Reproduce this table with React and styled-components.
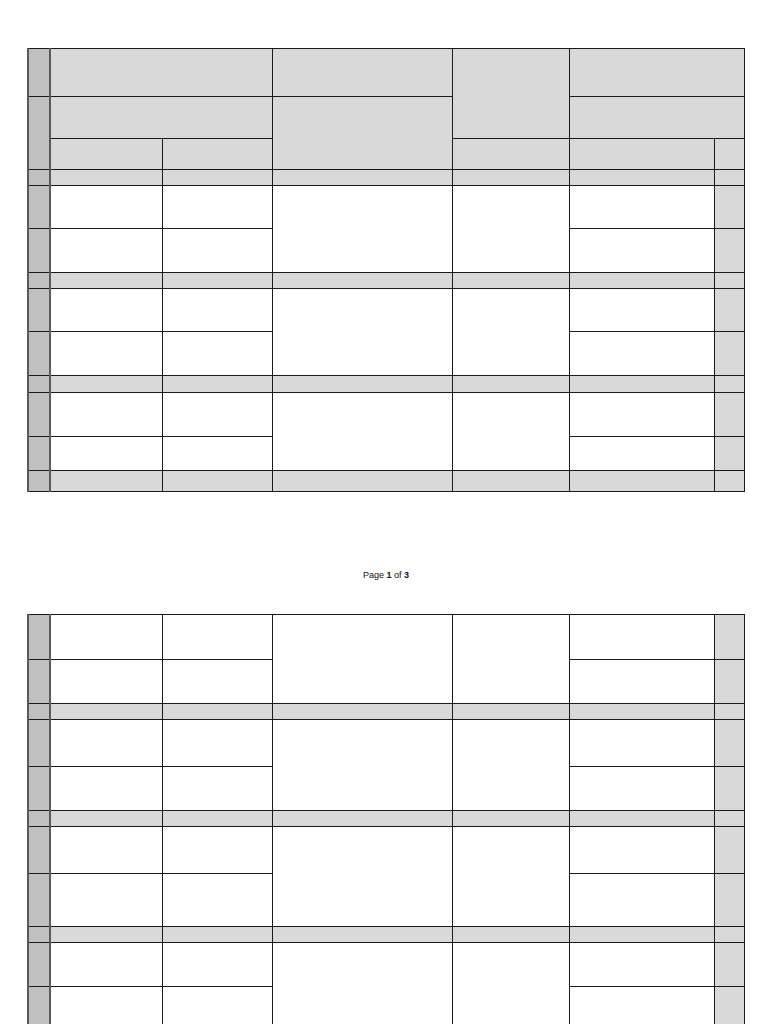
import React from "react";
import styled, { createGlobalStyle } from "styled-components";

const Global = createGlobalStyle`
  html, body { margin: 0; padding: 0; background: #fff; }
  body { font-family: "Liberation Sans", Arial, sans-serif; }
`;

const Page = styled.div`
  width: 768px;
  height: 1024px;
  overflow: hidden;
  padding-top: 48px;
  box-sizing: border-box;
`;

const Sheet = styled.table`
  margin-left: 27px;
  border-collapse: collapse;
  table-layout: fixed;
  width: 716px;
`;

const Row = styled.tr`
  height: ${(p) => p.$h}px;
`;

const Cell = styled.td`
  padding: 0;
  border: 1px solid #1a1a1a;
  background: ${(p) => (p.$gray ? "#d9d9d9" : "#ffffff")};
`;

const Strip = styled.td`
  padding: 0;
  border: 1px solid #1a1a1a;
  border-left: 2px solid #5a5a5a;
  border-right: 2px solid #5a5a5a;
  background: #c0c0c0;
`;

const Footer = styled.div`
  height: 122px;
  display: flex;
  align-items: flex-start;
  justify-content: center;
  padding-top: 78px;
  padding-left: 4px;
  box-sizing: border-box;
  font-size: 9px;
  line-height: 11px;
  color: #111;
  b { font-weight: 700; }
`;

const widths = [22, 112, 110, 180, 117, 145, 30];

const Cols = () => (
  <colgroup>
    {widths.map((w, i) => (
      <col key={i} style={{ width: w }} />
    ))}
  </colgroup>
);

const GrayRow = ({ h }) => (
  <Row $h={h}>
    <Strip />
    <Cell $gray />
    <Cell $gray />
    <Cell $gray />
    <Cell $gray />
    <Cell $gray />
    <Cell $gray />
  </Row>
);

const Group = ({ h1, h2 }) => (
  <>
    <Row $h={h1}>
      <Strip />
      <Cell />
      <Cell />
      <Cell rowSpan={2} />
      <Cell rowSpan={2} />
      <Cell />
      <Cell $gray />
    </Row>
    <Row $h={h2}>
      <Strip />
      <Cell />
      <Cell />
      <Cell />
      <Cell $gray />
    </Row>
  </>
);

const Header = () => (
  <>
    <Row $h={48}>
      <Strip />
      <Cell $gray colSpan={2} />
      <Cell $gray />
      <Cell $gray rowSpan={2} />
      <Cell $gray colSpan={2} />
    </Row>
    <Row $h={42}>
      <Strip rowSpan={2} />
      <Cell $gray colSpan={2} />
      <Cell $gray rowSpan={2} />
      <Cell $gray colSpan={2} />
    </Row>
    <Row $h={31}>
      <Cell $gray />
      <Cell $gray />
      <Cell $gray />
      <Cell $gray />
      <Cell $gray />
    </Row>
  </>
);

export default function App() {
  return (
    <Page>
      <Global />
      <Sheet>
        <Cols />
        <tbody>
          <Header />
          <GrayRow h={16} />
          <Group h1={43} h2={44} />
          <GrayRow h={16} />
          <Group h1={43} h2={44} />
          <GrayRow h={17} />
          <Group h1={44} h2={34} />
          <GrayRow h={21} />
        </tbody>
      </Sheet>
      <Footer>
        <span>
          Page <b>1</b> of <b>3</b>
        </span>
      </Footer>
      <Sheet>
        <Cols />
        <tbody>
          <Group h1={45} h2={44} />
          <GrayRow h={16} />
          <Group h1={47} h2={44} />
          <GrayRow h={16} />
          <Group h1={47} h2={53} />
          <GrayRow h={16} />
          <Group h1={44} h2={44} />
        </tbody>
      </Sheet>
    </Page>
  );
}
